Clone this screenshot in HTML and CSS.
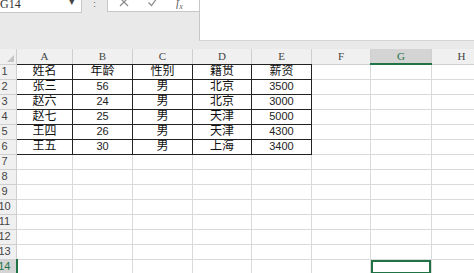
FILE: index.html
```html
<!DOCTYPE html>
<html lang="zh">
<head>
    <meta charset="UTF-8">
    <title>Sheet1 - G14</title>
    <link rel="stylesheet" href="styles.css">
</head>
<body>
    <div class="formula-bar">
        <div class="name-box">
            <span class="name">G14</span>
            <span class="caret">&#9662;</span>
        </div>
        <div class="grip">&#8942;</div>
        <div class="fx-buttons">
            <svg class="icon" width="12" height="12" viewBox="0 0 12 12">
                <path d="M2 2 L10 10 M10 2 L2 10" stroke="#8a8a8a" stroke-width="1.2" fill="none"/>
            </svg>
            <svg class="icon" width="12" height="12" viewBox="0 0 12 12">
                <path d="M1.5 6.5 L4.5 9.5 L10.5 1.5" stroke="#8a8a8a" stroke-width="1.2" fill="none"/>
            </svg>
            <span class="fx">f<sub>x</sub></span>
        </div>
        <div class="formula-input"></div>
    </div>

    <div class="sheet">
        <table>
            <colgroup>
                <col class="c-rh"><col class="c-a"><col class="c-b"><col class="c-c"><col class="c-d">
                <col class="c-e"><col class="c-f"><col class="c-g"><col class="c-h">
            </colgroup>
            <tr class="head">
                <th class="corner"><span class="tri"></span></th>
                <th class="top">A</th><th class="top">B</th><th class="top">C</th><th class="top">D</th><th class="top">E</th>
                <th>F</th><th class="sel">G</th><th>H</th>
            </tr>
            <tr>
                <th>1</th>
                <td class="d">姓名</td><td class="d">年龄</td><td class="d">性别</td><td class="d">籍贯</td><td class="d">薪资</td>
                <td></td><td></td><td></td>
            </tr>
            <tr>
                <th>2</th>
                <td class="d">张三</td><td class="d num">56</td><td class="d">男</td><td class="d">北京</td><td class="d num">3500</td>
                <td></td><td></td><td></td>
            </tr>
            <tr>
                <th>3</th>
                <td class="d">赵六</td><td class="d num">24</td><td class="d">男</td><td class="d">北京</td><td class="d num">3000</td>
                <td></td><td></td><td></td>
            </tr>
            <tr>
                <th>4</th>
                <td class="d">赵七</td><td class="d num">25</td><td class="d">男</td><td class="d">天津</td><td class="d num">5000</td>
                <td></td><td></td><td></td>
            </tr>
            <tr>
                <th>5</th>
                <td class="d">王四</td><td class="d num">26</td><td class="d">男</td><td class="d">天津</td><td class="d num">4300</td>
                <td></td><td></td><td></td>
            </tr>
            <tr>
                <th>6</th>
                <td class="d">王五</td><td class="d num">30</td><td class="d">男</td><td class="d">上海</td><td class="d num">3400</td>
                <td></td><td></td><td></td>
            </tr>
            <tr><th>7</th><td></td><td></td><td></td><td></td><td></td><td></td><td></td><td></td></tr>
            <tr><th>8</th><td></td><td></td><td></td><td></td><td></td><td></td><td></td><td></td></tr>
            <tr><th>9</th><td></td><td></td><td></td><td></td><td></td><td></td><td></td><td></td></tr>
            <tr><th>10</th><td></td><td></td><td></td><td></td><td></td><td></td><td></td><td></td></tr>
            <tr><th>11</th><td></td><td></td><td></td><td></td><td></td><td></td><td></td><td></td></tr>
            <tr><th>12</th><td></td><td></td><td></td><td></td><td></td><td></td><td></td><td></td></tr>
            <tr><th>13</th><td></td><td></td><td></td><td></td><td></td><td></td><td></td><td></td></tr>
            <tr>
                <th class="sel-row">14</th>
                <td></td><td></td><td></td><td></td><td></td><td></td><td class="active"></td><td></td>
            </tr>
        </table>
    </div>
</body>
</html>
```

FILE: styles.css
```css
body {
    margin: 0;
    width: 474px;
    height: 273px;
    overflow: hidden;
    background: #fff;
    font-family: "Liberation Sans", "Noto Sans CJK SC", sans-serif;
}
.formula-bar {
    display: flex;
    align-items: flex-start;
    height: 49px;
    background: #e9e9e9;
}
.name-box {
    width: 81px;
    height: 12px;
    background: #fff;
    border-right: 1px solid #c6c6c6;
    border-bottom: 1px solid #c6c6c6;
    position: relative;
    overflow: hidden;
}
.name {
    position: absolute;
    left: 0;
    top: -3px;
    font-family: "Liberation Serif", serif;
    font-size: 12px;
    color: #333;
}
.caret {
    position: absolute;
    left: 69px;
    top: -5px;
    font-size: 11px;
    color: #444;
}
.grip {
    width: 10px;
    margin-left: 7px;
    margin-top: -3px;
    font-size: 11px;
    color: #777;
}
.fx-buttons {
    display: flex;
    align-items: flex-start;
    margin-left: 8px;
    width: 92px;
    height: 12px;
    background: #fff;
    border-left: 1px solid #c6c6c6;
    border-bottom: 1px solid #c6c6c6;
    overflow: hidden;
    gap: 17px;
    padding-left: 10px;
    box-sizing: border-box;
}
.icon {
    margin-top: -4px;
}
.fx {
    margin-top: -5px;
    font-family: "Liberation Serif", serif;
    font-style: italic;
    font-size: 12px;
    color: #666;
}
.fx sub {
    font-size: 8px;
}
.formula-input {
    flex: 1;
    height: 41px;
    background: #fff;
    border-left: 1px solid #c6c6c6;
    border-bottom: 1px solid #d4d4d4;
    box-sizing: border-box;
}
.sheet {
    overflow: hidden;
}
table {
    border-collapse: collapse;
    table-layout: fixed;
    margin-left: -8px;
    width: 499px;
}
.c-rh { width: 24px; }
.c-a { width: 56px; }
.c-b { width: 60px; }
.c-c { width: 60px; }
.c-d { width: 59px; }
.c-e { width: 60px; }
.c-f { width: 59px; }
.c-g { width: 61px; }
.c-h { width: 60px; }
tr {
    height: 15px;
}
td, th {
    padding: 0;
    border: 1px solid #dadada;
    text-align: center;
    white-space: nowrap;
    overflow: hidden;
    line-height: 13px;
}
td {
    font-size: 12px;
    color: #111;
}
th {
    background: #f0f0f0;
    border-color: #cfcfcf;
    font-weight: normal;
    font-size: 11px;
    color: #444;
}
.head th {
    font-family: "Liberation Serif", serif;
    border-top: none;
}
.head th.top {
    border-bottom-color: #222;
}
.corner {
    position: relative;
}
.tri {
    position: absolute;
    right: 2px;
    bottom: 2px;
    width: 0;
    height: 0;
    border-left: 7px solid transparent;
    border-bottom: 7px solid #c4c4c4;
}
td.d {
    border-color: #222;
}
td.num {
    font-size: 11px;
    color: #222;
}
.head th.sel {
    background: #d4d4d4;
    color: #217346;
    border-bottom: 2px solid #217346;
}
th.sel-row {
    background: #d4d4d4;
    color: #217346;
    border-right: 2px solid #217346;
}
td.active {
    box-shadow: inset 0 0 0 2px #217346;
}
```
